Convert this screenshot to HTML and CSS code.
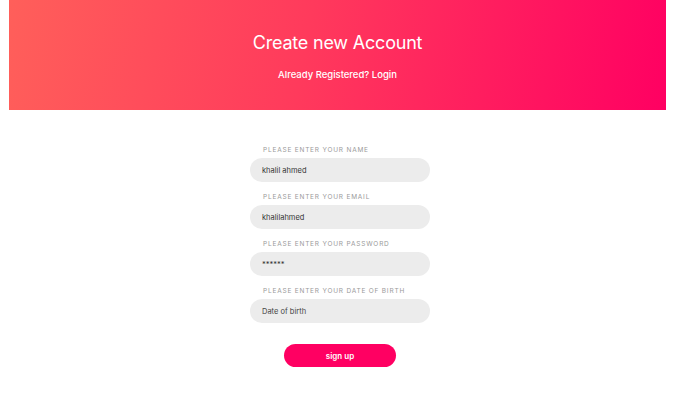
FILE: index.html
```html
<!DOCTYPE html>
<html lang="en">
<head>
  <meta charset="UTF-8">
  <meta name="viewport" content="width=device-width, initial-scale=1.0">
  <title>Create new Account</title>
  <link rel="stylesheet" href="styles.css">
</head>
<body>
  <!-- Banner -->
  <header class="banner">
    <h1>Create new Account</h1>
    <p>Already Registered? <a href="#">Login</a></p>
  </header>

  <!-- Signup Form -->
  <form class="signup-form">
    <label class="field">
      <span>Please enter your name</span>
      <input type="text" value="khalil ahmed">
    </label>
    <label class="field">
      <span>Please enter your email</span>
      <input type="text" value="khalilahmed">
    </label>
    <label class="field">
      <span>Please enter your password</span>
      <input type="text" value="******">
    </label>
    <label class="field">
      <span>Please enter your date of birth</span>
      <input type="text" placeholder="Date of birth">
    </label>
    <button type="button">sign up</button>
  </form>
</body>
</html>
```
FILE: styles.css
```css
/* Reset */
* {
  margin: 0;
  padding: 0;
  box-sizing: border-box;
  font-family: Inter, 'Open Sans', sans-serif;
}

body {
  background-color: #fff;
  color: #333;
}

:root {
  --pink: #ff0062;
  --coral: #ff5f5a;
  --field-bg: #ececec;
  --label: #9a9a9a;
}

/* Banner */
.banner {
  width: 657px;
  height: 110px;
  margin-left: 9px;
  background: linear-gradient(100deg, var(--coral) 0%, #ff3a5c 45%, var(--pink) 100%);
  color: #fff;
  text-align: center;
  padding-top: 31px;
}

.banner h1 {
  font-size: 18px;
  font-weight: 400;
  letter-spacing: -0.2px;
  line-height: 24px;
}

.banner p {
  margin-top: 13px;
  font-size: 9.5px;
  font-weight: 500;
  line-height: 14px;
}

.banner a {
  color: #fff;
  text-decoration: none;
}

/* Form */
.signup-form {
  width: 180px;
  margin: 35px 0 0 250px;
  display: flex;
  flex-direction: column;
  align-items: center;
}

.field {
  display: flex;
  flex-direction: column;
  width: 180px;
  margin-bottom: 10px;
}

.field span {
  font-size: 6.5px;
  line-height: 10px;
  letter-spacing: 0.8px;
  text-transform: uppercase;
  white-space: nowrap;
  color: var(--label);
  padding-left: 13px;
  margin-bottom: 3px;
}

.field input {
  height: 24px;
  border: none;
  outline: none;
  border-radius: 12px;
  background-color: var(--field-bg);
  padding: 0 12px;
  font-size: 7.5px;
  color: #333;
}

.field input::placeholder {
  color: #444;
}

.signup-form button {
  width: 112px;
  height: 23px;
  margin-top: 11px;
  border: none;
  border-radius: 12px;
  background-color: var(--pink);
  color: #fff;
  font-size: 8px;
  font-weight: 600;
  cursor: pointer;
}
```
